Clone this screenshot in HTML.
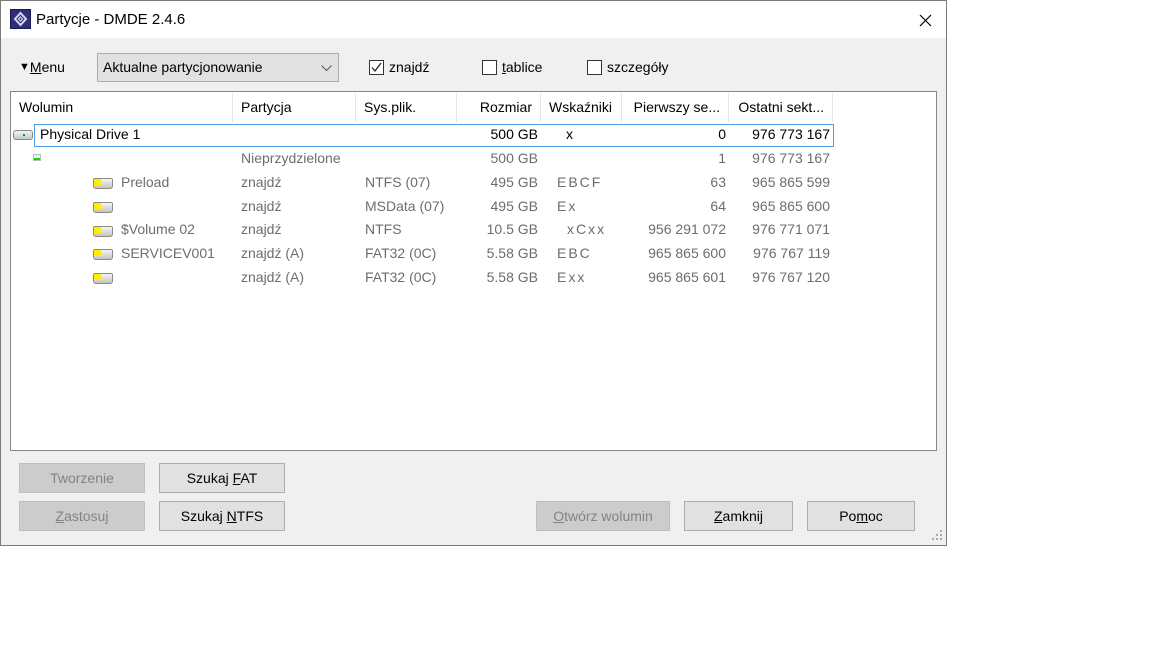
<!DOCTYPE html>
<html><head><meta charset="utf-8"><style>
*{margin:0;padding:0;box-sizing:border-box}
body{width:1152px;height:648px;background:#fff;font-family:"Liberation Sans","DejaVu Sans",sans-serif;font-size:14px;color:#000;position:relative;overflow:hidden}
.a{position:absolute;white-space:nowrap}
#win{position:absolute;left:0;top:0;width:947px;height:546px;box-shadow:inset 0 0 0 1px #7a7a7a;background:#f0f0f0}
#title{position:absolute;left:1px;top:1px;width:945px;height:37px;background:#fff}
.btn{position:absolute;height:30px;border:1px solid #adadad;background:#e1e1e1;text-align:center;line-height:28px;font-size:14px}
.dis{background:#cccccc;border-color:#bfbfbf;color:#838383}
.cb{position:absolute;width:15px;height:15px;border:1px solid #333;background:#fff}
#list{position:absolute;left:10px;top:91px;width:927px;height:360px;border:1px solid #828790;background:#fff}
.hd{position:absolute;top:1px;height:29px;line-height:29px;border-right:1px solid #e5e5e5;padding:0 8px;color:#000}
.r{text-align:right}
.g{color:#6d6d6d}
.ic{position:absolute;width:20px;height:11px;border:1px solid #8a8a8a;border-radius:2px 2px 3px 3px;background:linear-gradient(#f6f6f6,#c4c4c4)}
.ic::before{content:"";position:absolute;left:0;top:0;width:7px;height:6px;background:#ffee00}
</style></head><body>
<div id="win">
<div id="title">
 <div class="a" style="left:9px;top:8px;width:21px;height:20px;background:#2e2e7a;border:1px solid #1a1a50">
  <svg width="19" height="18" viewBox="0 0 19 18"><path d="M9.5 3 L15 9 L9.5 15 L4 9 Z" fill="none" stroke="#d8d8f0" stroke-width="2"/><path d="M9.5 7 L11.5 9 L9.5 11 L7.5 9Z" fill="#2e2e7a" stroke="#d8d8f0" stroke-width="1.2"/></svg>
 </div>
 <div class="a" style="left:35px;top:10px;font-size:15px">Partycje - DMDE 2.4.6</div>
 <svg class="a" style="left:918px;top:13px" width="13" height="13"><path d="M1 1L12 12M12 1L1 12" stroke="#000" stroke-width="1.2"/></svg>
</div>
<div class="a" style="left:19px;top:59px"><span style="font-size:11px;position:relative;top:-2px">▼</span><u>M</u>enu</div>
<div class="a" style="left:97px;top:53px;width:242px;height:29px;border:1px solid #adadad;background:#e1e1e1;padding:5px 0 0 5px">Aktualne partycjonowanie
 <svg class="a" style="left:223px;top:11px" width="11" height="7"><path d="M0.5 0.5L5.5 5.5L10.5 0.5" fill="none" stroke="#555"/></svg></div>
<div class="cb" style="left:369px;top:60px"><svg width="13" height="13" style="position:absolute;left:0;top:0"><path d="M2 6.5L5 10L11 2" fill="none" stroke="#222" stroke-width="1.3"/></svg></div>
<div class="a" style="left:389px;top:59px">znajdź</div>
<div class="cb" style="left:482px;top:60px"></div>
<div class="a" style="left:502px;top:59px"><u>t</u>ablice</div>
<div class="cb" style="left:587px;top:60px"></div>
<div class="a" style="left:607px;top:59px">szczegóły</div>

<div id="list">
 <div class="hd" style="left:0;width:222px">Wolumin</div>
 <div class="hd" style="left:222px;width:123px">Partycja</div>
 <div class="hd" style="left:345px;width:101px">Sys.plik.</div>
 <div class="hd r" style="left:446px;width:84px">Rozmiar</div>
 <div class="hd" style="left:530px;width:81px">Wskaźniki</div>
 <div class="hd r" style="left:611px;width:107px">Pierwszy se...</div>
 <div class="hd r" style="left:718px;width:104px">Ostatni sekt...</div>

 <div class="a" style="left:23px;top:32px;width:800px;height:23px;border:1px solid #4d9be0"></div>
 <div class="a" style="left:2px;top:38px;width:20px;height:10px;border:1px solid #888;border-radius:3px;background:linear-gradient(#f4f4f4,#c8c8c8)"><div style="position:absolute;left:9px;top:3px;width:2px;height:2px;background:#0a0"></div></div>
 <div class="a" style="left:29px;top:34px">Physical Drive 1</div>
 <div class="a r" style="left:446px;top:34px;width:81px">500 GB</div>
 <div class="a" style="left:555px;top:34px">x</div>
 <div class="a r" style="left:611px;top:34px;width:104px">0</div>
 <div class="a r" style="left:718px;top:34px;width:101px">976 773 167</div>

 <div class="a" style="left:22px;top:62px;width:8px;height:7px;border:1px solid #bbb;background:#f0f0f0"><div style="position:absolute;left:0;top:3px;width:6px;height:2px;background:#0d0"></div></div>

 <div class="g">
 <div class="a" style="left:230px;top:58px">Nieprzydzielone</div>
 <div class="a r" style="left:446px;top:58px;width:81px">500 GB</div>
 <div class="a r" style="left:611px;top:58px;width:104px">1</div>
 <div class="a r" style="left:718px;top:58px;width:101px">976 773 167</div>

 <div class="ic" style="left:82px;top:86px"></div><div class="a" style="left:110px;top:82px">Preload</div>
 <div class="a" style="left:230px;top:82px">znajdź</div><div class="a" style="left:354px;top:82px">NTFS (07)</div>
 <div class="a r" style="left:446px;top:82px;width:81px">495 GB</div><div class="a" style="left:546px;top:82px;letter-spacing:2px">EBCF</div>
 <div class="a r" style="left:611px;top:82px;width:104px">63</div><div class="a r" style="left:718px;top:82px;width:101px">965 865 599</div>

 <div class="ic" style="left:82px;top:110px"></div>
 <div class="a" style="left:230px;top:106px">znajdź</div><div class="a" style="left:354px;top:106px">MSData (07)</div>
 <div class="a r" style="left:446px;top:106px;width:81px">495 GB</div><div class="a" style="left:546px;top:106px;letter-spacing:2px">Ex</div>
 <div class="a r" style="left:611px;top:106px;width:104px">64</div><div class="a r" style="left:718px;top:106px;width:101px">965 865 600</div>

 <div class="ic" style="left:82px;top:134px"></div><div class="a" style="left:110px;top:129px">$Volume 02</div>
 <div class="a" style="left:230px;top:129px">znajdź</div><div class="a" style="left:354px;top:129px">NTFS</div>
 <div class="a r" style="left:446px;top:129px;width:81px">10.5 GB</div><div class="a" style="left:556px;top:129px;letter-spacing:2px">xCxx</div>
 <div class="a r" style="left:611px;top:129px;width:104px">956 291 072</div><div class="a r" style="left:718px;top:129px;width:101px">976 771 071</div>

 <div class="ic" style="left:82px;top:157px"></div><div class="a" style="left:110px;top:153px">SERVICEV001</div>
 <div class="a" style="left:230px;top:153px">znajdź (A)</div><div class="a" style="left:354px;top:153px">FAT32 (0C)</div>
 <div class="a r" style="left:446px;top:153px;width:81px">5.58 GB</div><div class="a" style="left:546px;top:153px;letter-spacing:2px">EBC</div>
 <div class="a r" style="left:611px;top:153px;width:104px">965 865 600</div><div class="a r" style="left:718px;top:153px;width:101px">976 767 119</div>

 <div class="ic" style="left:82px;top:181px"></div>
 <div class="a" style="left:230px;top:177px">znajdź (A)</div><div class="a" style="left:354px;top:177px">FAT32 (0C)</div>
 <div class="a r" style="left:446px;top:177px;width:81px">5.58 GB</div><div class="a" style="left:546px;top:177px;letter-spacing:2px">Exx</div>
 <div class="a r" style="left:611px;top:177px;width:104px">965 865 601</div><div class="a r" style="left:718px;top:177px;width:101px">976 767 120</div>
 </div>
</div>

<div class="btn dis" style="left:19px;top:463px;width:126px">Tworzenie</div>
<div class="btn" style="left:159px;top:463px;width:126px">Szukaj <u>F</u>AT</div>
<div class="btn dis" style="left:19px;top:501px;width:126px"><u>Z</u>astosuj</div>
<div class="btn" style="left:159px;top:501px;width:126px">Szukaj <u>N</u>TFS</div>
<div class="btn dis" style="left:536px;top:501px;width:134px"><u>O</u>twórz wolumin</div>
<div class="btn" style="left:684px;top:501px;width:109px"><u>Z</u>amknij</div>
<div class="btn" style="left:807px;top:501px;width:108px">Po<u>m</u>oc</div>
<svg class="a" style="left:932px;top:530px" width="12" height="12"><g fill="#aaa"><rect x="8" y="0" width="2" height="2"/><rect x="4" y="4" width="2" height="2"/><rect x="8" y="4" width="2" height="2"/><rect x="0" y="8" width="2" height="2"/><rect x="4" y="8" width="2" height="2"/><rect x="8" y="8" width="2" height="2"/></g></svg>
</div>
</body></html>
